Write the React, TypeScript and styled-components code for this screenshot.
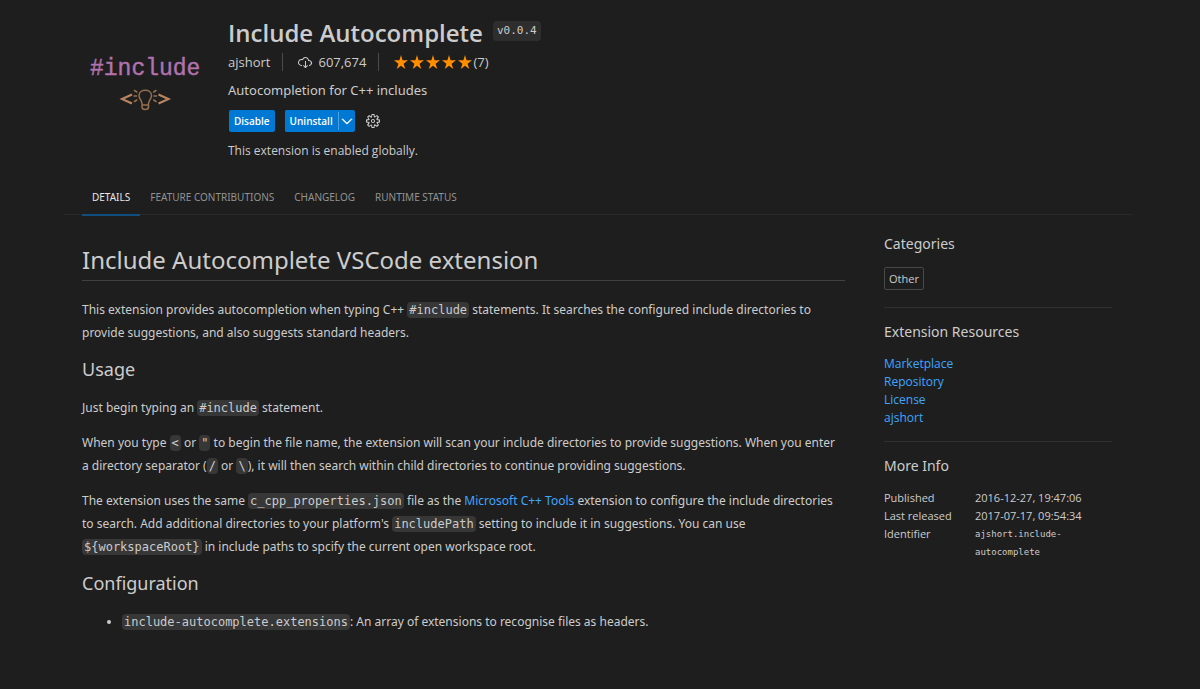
import React from "react";
import styled, { createGlobalStyle } from "styled-components";
import { VscCloudDownload, VscGear, VscStarFull, VscChevronDown } from "react-icons/vsc";

const mono = `"DejaVu Sans Mono", "Liberation Mono", monospace`;
const compact = `"Open Sans", "Noto Sans", sans-serif`;

const GlobalStyle = createGlobalStyle`
  *, *::before, *::after { box-sizing: border-box; }
  html { background: #1e1e1e; }
  body {
    margin: 0;
    background: #1e1e1e;
    color: #cccccc;
    font-family: "Noto Sans", "Open Sans", sans-serif;
    font-size: 13px;
    line-height: 18px;
  }
  a { color: #3ea6ff; text-decoration: none; }
  button { font: inherit; cursor: pointer; }
`;

const Page = styled.div`
  padding: 14px 67px 32px 64px;
`;

const Header = styled.header`
  display: flex;
  gap: 20px;
  padding: 0 18px;
`;

const Logo = styled.svg`
  flex: none;
  width: 126px;
  height: 126px;
  margin-top: 6px;
`;

const Summary = styled.div`
  flex: 1;
  min-width: 0;
  font-family: ${compact};
`;

const TitleRow = styled.div`
  display: flex;
  align-items: center;
  gap: 10px;
  height: 38px;
`;

const Title = styled.h1`
  margin: 0;
  font-size: 24px;
  font-weight: 600;
  line-height: 36px;
`;

const Version = styled.code`
  margin-bottom: 4px;
  padding: 0 4px;
  border-radius: 4px;
  background: #2e2e2e;
  font-family: ${mono};
  font-size: 11px;
  line-height: 20px;
`;

const MetaRow = styled.div`
  display: flex;
  align-items: center;
  height: 20px;
`;

const MetaItem = styled.span`
  display: flex;
  align-items: center;
  gap: 5px;
  & + & {
    margin-left: 12px;
    padding-left: 14px;
    border-left: 1px solid #4a4a4a;
  }
`;

const Stars = styled.span`
  display: flex;
  color: #ff8e00;
`;

const Rating = styled.span`
  display: flex;
  align-items: center;
`;

const Description = styled.p`
  margin: 9px 0 0;
  font-family: "Noto Sans", sans-serif;
`;

const Actions = styled.div`
  display: flex;
  align-items: center;
  margin: 11px 0 0 1px;
`;

const ActionButton = styled.button`
  height: 22px;
  padding: 0 5px;
  border: 0;
  border-radius: 2px;
  background: #0078d4;
  color: #ffffff;
  font-size: 10px;
  font-weight: 600;
`;

const SplitButton = styled.div`
  display: flex;
  margin: 0 8px 0 10px;
  border-radius: 2px;
  background: #0078d4;
`;

const DropButton = styled.button`
  display: flex;
  align-items: center;
  height: 18px;
  margin: 2px 0;
  padding: 0;
  border: 0;
  border-left: 1px solid #4ba0e0;
  background: none;
  color: #ffffff;

  svg { stroke: currentColor; stroke-width: 0.6; }
`;

const IconButton = styled.button`
  display: flex;
  padding: 2px;
  border: 0;
  background: none;
  color: #cccccc;
`;

const Status = styled.p`
  margin: 10px 0 0;
  font-size: 12px;
`;

const Tabs = styled.nav`
  display: flex;
  margin-top: 19px;
  padding: 0 18px;
  border-bottom: 1px solid #292929;
`;

const Tab = styled.button<{ $active?: boolean }>`
  height: 37px;
  margin-bottom: -2px;
  padding: 0 10px;
  border: 0;
  border-bottom: 2px solid ${(p) => (p.$active ? "#114f80" : "transparent")};
  background: none;
  color: ${(p) => (p.$active ? "#e7e7e7" : "#929292")};
  font-size: 10px;
`;

const Body = styled.div`
  display: flex;
  gap: 39px;
  padding: 19px 21px 0 18px;
`;

const Readme = styled.main`
  flex: 1;
  min-width: 0;
  padding-top: 6px;
  font-size: 12px;
  line-height: 23px;

  p { margin: 0; }
  p + p { margin-top: 12px; }
`;

const ReadmeTitle = styled.h2`
  margin: 0 0 17px;
  border-bottom: 1px solid #404040;
  font-size: 24px;
  font-weight: 400;
  line-height: 40px;
`;

const SectionTitle = styled.h3`
  margin: 10px 0 12px;
  font-size: 18px;
  font-weight: 400;
  line-height: 30px;
`;

const Code = styled.code`
  padding: 1px 2px;
  border-radius: 4px;
  background: #373737;
  font-family: ${mono};
  font-size: 12px;
  line-height: 14px;
`;

const List = styled.ul`
  margin: 0;
  padding-left: 40px;
`;

const Sidebar = styled.aside`
  flex: none;
  width: 228px;
  font-family: ${compact};
`;

const Block = styled.section`
  padding-bottom: 14px;
  & + & {
    padding-top: 14px;
    border-top: 1px solid #303030;
  }
`;

const BlockTitle = styled.h2`
  margin: 0 0 13px;
  font-family: "Noto Sans", sans-serif;
  font-size: 14px;
  font-weight: 400;
  line-height: 20px;
`;

const Category = styled.a`
  display: block;
  width: fit-content;
  margin-bottom: 3px;
  padding: 0 4px;
  border: 1px solid #484848;
  border-radius: 2px;
  color: #cccccc;
  font-size: 11px;
  line-height: 21px;
`;

const Links = styled.ul`
  margin: 0;
  padding: 0;
  list-style: none;
  font-size: 12px;
`;

const Info = styled.table`
  width: 100%;
  border-collapse: collapse;
  font-size: 11px;
  line-height: 18px;

  th, td {
    padding: 0;
    font-weight: 400;
    text-align: left;
    vertical-align: top;
  }
  th { width: 91px; }
`;

const Identifier = styled.code`
  display: block;
  font-family: ${mono};
  font-size: 9px;
`;

const tabs = ["DETAILS", "FEATURE CONTRIBUTIONS", "CHANGELOG", "RUNTIME STATUS"];
const resources = ["Marketplace", "Repository", "License", "ajshort"];

export default function App() {
  return (
    <Page>
      <GlobalStyle />
      <Header>
        <Logo viewBox="0 0 126 126" role="img" aria-label="Include Autocomplete logo">
          <text
            x="8"
            y="55"
            fill="#b172ae"
            stroke="#b172ae"
            strokeWidth="0.4"
            fontFamily="Liberation Mono, monospace"
            fontSize="23"
          >
            #include
          </text>
          <g fill="none" stroke="#b98561" strokeWidth="2.1">
            <path d="M50 74.500 L40 79 L50 83.500" />
            <path d="M76.500 74.500 L86.500 79 L76.500 83.500" />
          </g>
          <g fill="none" stroke="#94704f" strokeWidth="1.5" strokeLinecap="round">
            <path d="M60 83.500 C59.500 79.500 57 79 57 75.500 C57 68.500 69.500 68.500 69.500 75.500 C69.500 79 67 79.500 66.500 83.500 V87 Q66.500 89.500 63.250 89.500 Q60 89.500 60 87 Z M60 85 H66.500" />
            <path d="M52.500 70.500 L54.800 72 M52 76 H54.500 M52.500 81.500 L54.800 80 M74 70.500 L71.700 72 M74.500 76 H72 M74 81.500 L71.700 80" />
          </g>
        </Logo>
        <Summary>
          <TitleRow>
            <Title>Include Autocomplete</Title>
            <Version>v0.0.4</Version>
          </TitleRow>
          <MetaRow>
            <MetaItem>ajshort</MetaItem>
            <MetaItem>
              <VscCloudDownload size={16} />
              607,674
            </MetaItem>
            <MetaItem>
              <Rating>
                <Stars>
                  {[1, 2, 3, 4, 5].map((n) => (
                    <VscStarFull key={n} size={16} />
                  ))}
                </Stars>
                (7)
              </Rating>
            </MetaItem>
          </MetaRow>
          <Description>Autocompletion for C++ includes</Description>
          <Actions>
            <ActionButton>Disable</ActionButton>
            <SplitButton>
              <ActionButton>Uninstall</ActionButton>
              <DropButton aria-label="More uninstall options">
                <VscChevronDown size={16} />
              </DropButton>
            </SplitButton>
            <IconButton aria-label="Manage">
              <VscGear size={16} />
            </IconButton>
          </Actions>
          <Status>This extension is enabled globally.</Status>
        </Summary>
      </Header>
      <Tabs>
        {tabs.map((name, i) => (
          <Tab key={name} $active={i === 0}>
            {name}
          </Tab>
        ))}
      </Tabs>
      <Body>
        <Readme>
          <ReadmeTitle>Include Autocomplete VSCode extension</ReadmeTitle>
          <p>
            This extension provides autocompletion when typing C++ <Code>#include</Code> statements. It
            searches the configured include directories to provide suggestions, and also suggests
            standard headers.
          </p>
          <SectionTitle>Usage</SectionTitle>
          <p>
            Just begin typing an <Code>#include</Code> statement.
          </p>
          <p>
            When you type <Code>&lt;</Code> or <Code>"</Code> to begin the file name, the extension will
            scan your include directories to provide suggestions. When you enter a&nbsp;directory
            separator (<Code>/</Code> or <Code>\</Code>), it will then search within child directories to
            continue providing suggestions.
          </p>
          <p>
            The extension uses the same <Code>c_cpp_properties.json</Code> file as the{" "}
            <a href="#cpptools">Microsoft C++ Tools</a> extension to configure the include directories
            to&nbsp;search. Add additional directories to your platform's <Code>includePath</Code> setting
            to include it in suggestions. You can use <Code>{"${workspaceRoot}"}</Code> in include paths
            to spcify the current open workspace root.
          </p>
          <SectionTitle>Configuration</SectionTitle>
          <List>
            <li>
              <Code>include-autocomplete.extensions</Code>: An array of extensions to recognise files as
              headers.
            </li>
          </List>
        </Readme>
        <Sidebar>
          <Block>
            <BlockTitle>Categories</BlockTitle>
            <Category href="#other">Other</Category>
          </Block>
          <Block>
            <BlockTitle>Extension Resources</BlockTitle>
            <Links>
              {resources.map((name) => (
                <li key={name}>
                  <a href={`#${name}`}>{name}</a>
                </li>
              ))}
            </Links>
          </Block>
          <Block>
            <BlockTitle>More Info</BlockTitle>
            <Info>
              <tbody>
                <tr>
                  <th scope="row">Published</th>
                  <td>2016-12-27, 19:47:06</td>
                </tr>
                <tr>
                  <th scope="row">Last released</th>
                  <td>2017-07-17, 09:54:34</td>
                </tr>
                <tr>
                  <th scope="row">Identifier</th>
                  <td>
                    <Identifier>
                      ajshort.include-
                      <wbr />
                      autocomplete
                    </Identifier>
                  </td>
                </tr>
              </tbody>
            </Info>
          </Block>
        </Sidebar>
      </Body>
    </Page>
  );
}
